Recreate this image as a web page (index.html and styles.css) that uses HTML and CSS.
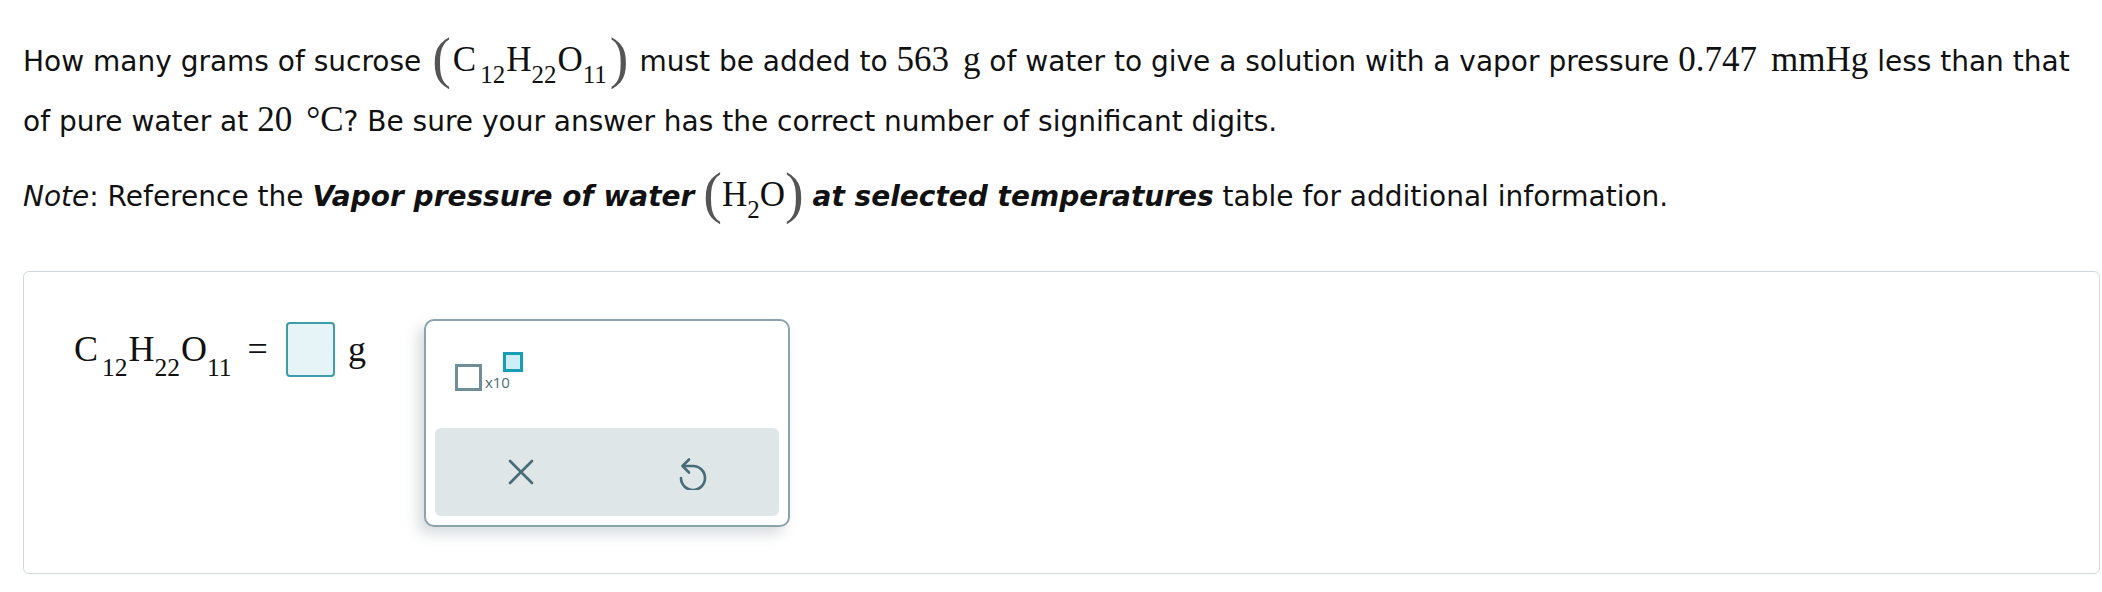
FILE: index.html
```html
<!DOCTYPE html>
<html lang="en">
<head>
<meta charset="utf-8">
<title>Sucrose vapor pressure</title>
<link rel="stylesheet" href="styles.css">
</head>
<body>
<div class="page">
  <p class="q">How many grams of sucrose <span class="m"><span class="paren">(</span>C<sub class="gap">12</sub>H<sub>22</sub>O<sub>11</sub><span class="paren">)</span></span> must be added to <span class="m">563&#8201;&#8201;g</span> of water to give a solution with a vapor pressure <span class="m">0.747&#8201;&#8201;mmHg</span> less than that of pure water at <span class="m">20&#8201;&#8201;°C</span>? Be sure your answer has the correct number of significant digits.</p>
  <p class="note"><i>Note</i>: Reference the <b><i>Vapor pressure of water</i></b> <span class="m"><span class="paren">(</span>H<sub>2</sub>O<span class="paren">)</span></span> <b><i>at selected temperatures</i></b> table for additional information.</p>
  <div class="answer">
    <div class="formula">C<sub class="gap">12</sub>H<sub>22</sub>O<sub>11</sub><span class="eq">=</span><span class="input"></span><span class="unit">g</span></div>
    <div class="pad">
      <div class="pad-top">
        <div class="sci">
          <span class="sci-base"></span>
          <span class="sci-x">x10</span>
          <span class="sci-exp"></span>
        </div>
      </div>
      <div class="pad-actions">
        <button class="act" type="button" aria-label="Clear">
          <svg width="26" height="26" viewBox="0 0 26 26"><path d="M2 2 L24 24 M24 2 L2 24" fill="none" stroke="#476c77" stroke-width="2.6" stroke-linecap="round"/></svg>
        </button>
        <button class="act" type="button" aria-label="Undo">
          <svg width="30" height="36" viewBox="0 0 30 36"><path d="M3 24 A12 12 0 1 0 15 12 H5" fill="none" stroke="#476c77" stroke-width="2.6" stroke-linecap="round" stroke-linejoin="round"/><path d="M11 5.5 L4.5 12 L11 18.5" fill="none" stroke="#476c77" stroke-width="2.6" stroke-linecap="round" stroke-linejoin="round"/></svg>
        </button>
      </div>
    </div>
  </div>
</div>
</body>
</html>
```

FILE: styles.css
```css
html, body {
  margin: 0;
  padding: 0;
  background: #ffffff;
}

.page {
  padding: 32px 2px 0 23px;
  font-family: "DejaVu Sans", Verdana, sans-serif;
  font-size: 28px;
  color: #111111;
}

.q {
  margin: 0;
  padding-right: 12px;
  line-height: 60px;
}

.note {
  margin: 15px 0 0;
  line-height: 60px;
}

.m {
  font-family: "Liberation Serif", "Times New Roman", serif;
  font-size: 35px;
  line-height: 1;
}

.m sub {
  font-size: 25px;
  vertical-align: -12px;
  line-height: 0;
  margin-right: 1px;
}

.gap {
  margin-left: 4px;
}

.paren {
  font-size: 56px;
  font-weight: normal;
  color: #555555;
  vertical-align: -6px;
  line-height: 30px;
  margin: 0 2px;
}

.note .paren {
  margin: 0;
}

.note .m sub {
  margin-right: 0;
}

.note b {
  font-weight: bold;
}

.answer {
  margin-top: 44px;
  border: 1px solid #cfd9dd;
  border-radius: 6px;
  padding: 47px 0 46px 50px;
  display: flex;
  align-items: flex-start;
}

.formula {
  margin-top: 2px;
  font-family: "Liberation Serif", "Times New Roman", serif;
  font-size: 36px;
  line-height: 56px;
  color: #111111;
  white-space: nowrap;
}

.formula sub {
  font-size: 25.5px;
  vertical-align: -15px;
  line-height: 0;
  margin-right: 1px;
}

.eq {
  margin: 0 18px 0 15px;
}

.input {
  display: inline-block;
  width: 45px;
  height: 51px;
  border: 2px solid #3d9dab;
  border-radius: 4px;
  background: #e6f4f8;
  vertical-align: -16px;
}

.unit {
  margin-left: 13px;
}

.pad {
  margin-left: 58px;
  width: 344px;
  border: 2px solid #8aa3ac;
  border-radius: 10px;
  padding: 9px;
  background: #ffffff;
  box-shadow: -6px 7px 14px rgba(40, 60, 70, 0.18);
}

.pad-top {
  height: 98px;
}

.sci {
  display: flex;
  align-items: flex-end;
  height: 39px;
  padding: 22px 0 0 20px;
}

.sci-base {
  width: 21px;
  height: 21px;
  border: 3px solid #6f8e98;
}

.sci-x {
  font-family: "Open Sans", "DejaVu Sans", sans-serif;
  font-size: 15px;
  line-height: 15px;
  color: #4b6d77;
  margin-left: 3px;
  margin-bottom: 1px;
}

.sci-exp {
  align-self: flex-start;
  width: 14px;
  height: 14px;
  border: 3px solid #179db4;
  background: #cdeef4;
  margin-left: -7px;
}

.pad-actions {
  height: 88px;
  border-radius: 6px;
  background: #dfe6e8;
  display: flex;
}

.act {
  flex: 1;
  border: 0;
  background: transparent;
  padding: 0;
  display: flex;
  align-items: center;
  justify-content: center;
}

.act svg {
  display: block;
}
```
